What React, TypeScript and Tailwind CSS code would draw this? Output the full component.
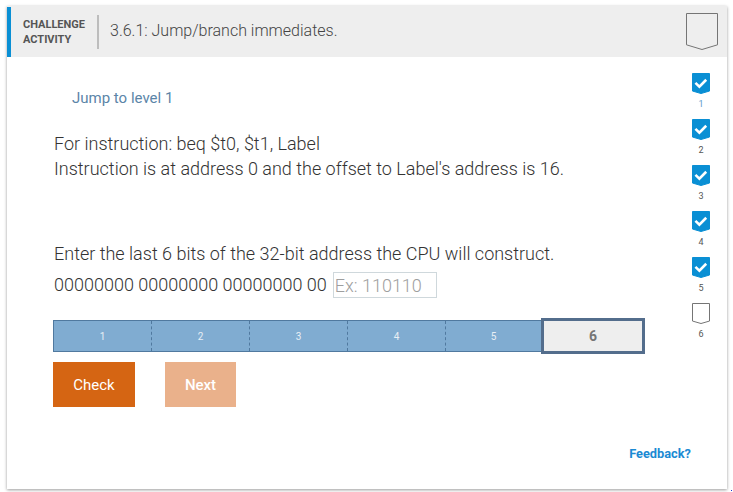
const font = { fontFamily: "Roboto, sans-serif" };

function Ribbon({ done, w, h }: { done: boolean; w: number; h: number }) {
  const notch = h * 0.86;
  const d = `M0.5,0.5 H${w - 0.5} V${notch} L${w / 2},${h - 0.5} L0.5,${notch} Z`;
  return (
    <svg width={w} height={h} viewBox={`0 0 ${w} ${h}`} className="block">
      <path
        d={d}
        fill={done ? "#0a8fd4" : "none"}
        stroke={done ? "#0a8fd4" : "#757575"}
        strokeWidth="1"
      />
      {done && (
        <path
          d={`M${w * 0.19},${h * 0.47} L${w * 0.41},${h * 0.65} L${w * 0.79},${h * 0.32}`}
          fill="none"
          stroke="#ffffff"
          strokeWidth="2.6"
        />
      )}
    </svg>
  );
}

export default function App() {
  const levels = [1, 2, 3, 4, 5, 6];
  return (
    <div className="relative w-[733px] h-[492px] bg-white overflow-hidden" style={font}>
      <div className="ml-[7px] pt-[6px]">
        <div className="w-[720px] h-[483px] bg-white shadow-[0_1px_3px_rgba(0,0,0,0.4)]">
          <div className="h-[51px] bg-[#eeeeee] flex items-center pt-[1px]">
            <div className="w-[4px] h-[50px] bg-[#0a8fd4]" />
            <div className="w-[86px] pl-[12px] text-[11px] leading-[15px] font-bold text-[#555555]">
              CHALLENGE
              <br />
              ACTIVITY
            </div>
            <div className="w-[2px] h-[34px] bg-[#bdbdbd]" />
            <div className="ml-[11px] mb-[2px] text-[16px] font-light text-[#444444]">
              3.6.1: Jump/branch immediates.
            </div>
            <div className="ml-auto mr-[9px] mt-[-1px]">
              <Ribbon done={false} w={32} h={37} />
            </div>
          </div>

          <div className="flex">
            <div className="w-[638px] pl-[46px]">
              <div className="pl-[19px] pt-[33px] text-[15px] leading-[17px] text-[#5b85a8]">Jump to level 1</div>
              <div className="mt-[24px] pl-[1px] text-[18px] leading-[25px] font-light text-[#333333]">
                For instruction: beq $t0, $t1, Label
                <br />
                Instruction is at address 0 and the offset to Label's address is 16.
              </div>
              <div className="mt-[60px] pl-[1px] text-[18px] leading-[25px] font-light text-[#333333]">
                Enter the last 6 bits of the 32-bit address the CPU will construct.
              </div>
              <div className="mt-[5px] pl-[1px] flex items-center text-[18px] leading-[25px] font-light text-[#333333]">
                00000000 00000000 00000000 00
                <div className="ml-[6px] mt-[1px] w-[104px] h-[26px] border border-[#cfd8dc] pl-[1px] text-[18px] leading-[25px] text-[#9e9e9e]">
                  Ex: 110110
                </div>
              </div>

              <div className="mt-[20px] flex items-center h-[36px] w-[592px]">
                <div className="flex w-[488px] h-[32px] bg-[#80acd1] border border-r-0 border-[#50799f]">
                  {levels.slice(0, 5).map((n, i) => (
                    <div
                      key={n}
                      className={
                        i === 0
                          ? "w-[97px] flex items-center justify-center text-[10px] text-[#e8eff5]"
                          : i === 4
                            ? "flex-1 border-l border-dashed border-[#50799f] flex items-center justify-center text-[10px] text-[#e8eff5]"
                            : "w-[98px] border-l border-dashed border-[#50799f] flex items-center justify-center text-[10px] text-[#e8eff5]"
                      }
                    >
                      {n}
                    </div>
                  ))}
                </div>
                <div className="w-[104px] h-[36px] bg-[#eeeeee] border-[3px] border-[#536d8c] flex items-center justify-center text-[14px] font-bold text-[#757575]">
                  6
                </div>
              </div>

              <div className="mt-[8px] flex gap-[30px]">
                <div className="w-[82px] h-[45px] pt-[1px] bg-[#d56513] flex items-center justify-center text-[15px] text-white">
                  Check
                </div>
                <div className="w-[71px] h-[45px] pt-[1px] bg-[#eab18b] flex items-center justify-center text-[15px] font-medium text-white">
                  Next
                </div>
              </div>
            </div>

            <div className="w-[82px] flex flex-col">
              <div className="flex flex-col items-center pl-[30px] pt-[16px]">
                {levels.map((n) => (
                  <div key={n} className="h-[46px] flex flex-col items-center">
                    <Ribbon done={n < 6} w={18} h={21} />
                    <div className={`mt-[4px] text-[9px] leading-[12px] ${n === 1 ? "text-[#5b9bc9]" : "text-[#555555]"}`}>{n}</div>
                  </div>
                ))}
              </div>
            </div>
          </div>

          <div className="mt-[37px] pr-[36px] text-right text-[12.8px] font-bold text-[#1b8ad3]">Feedback?</div>
        </div>
      </div>
      <div className="absolute left-[731px] top-[490px] w-[1px] h-[1px] bg-[#2233cc]" />
    </div>
  );
}
